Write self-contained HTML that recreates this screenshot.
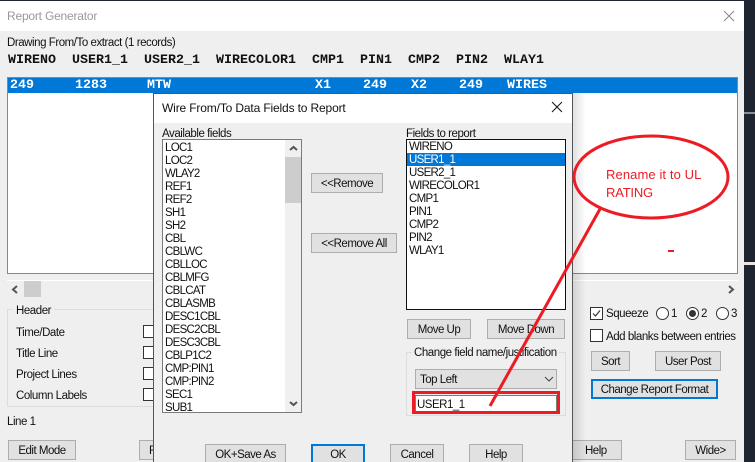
<!DOCTYPE html>
<html><head><meta charset="utf-8"><style>
html,body{margin:0;padding:0;width:755px;height:462px;overflow:hidden;background:#1f2530}
body{position:relative;font-family:"Liberation Sans",sans-serif;font-size:12px;color:#111}
div,span{position:absolute;box-sizing:border-box;white-space:nowrap}
.t{line-height:16px;height:14px;font-size:11.5px;letter-spacing:-.45px}
.b{background:#e1e1e1;border:1px solid #adadad;text-align:center;line-height:20px;font-size:11.5px;letter-spacing:-.5px}
.m{font-family:"Liberation Mono",monospace;font-weight:bold;font-size:13.33px;line-height:14px;height:14px}
.c{width:13px;height:13px;border:1px solid #333;background:#fff}
.r{width:13px;height:13px;border:1px solid #333;border-radius:50%;background:#fff}
.i{left:2px;line-height:15px;height:13px;font-size:11.5px;letter-spacing:-.7px}
</style></head><body>
<div style="left:744px;top:112px;width:11px;height:2px;background:#8a8d92"></div>
<div style="left:744px;top:262px;width:11px;height:3px;background:#e8e4e4"></div>
<div style="left:0;top:1px;width:744px;height:461px;background:#efefef"></div>
<div style="left:0;top:1px;width:744px;height:30px;background:#fff"></div>
<div class="t" style="left:7px;top:8px;color:#999;font-size:12px;letter-spacing:-.2px">Report Generator</div>
<svg style="position:absolute;left:723px;top:10px" width="12" height="12"><path d="M1 1L11 11M11 1L1 11" stroke="#888" fill="none"/></svg>
<div class="t" style="left:7px;top:35px">Drawing From/To extract (1 records)</div>
<div class="m" style="left:8px;top:54px">WIRENO</div>
<div class="m" style="left:72px;top:54px">USER1_1</div>
<div class="m" style="left:144px;top:54px">USER2_1</div>
<div class="m" style="left:216px;top:54px">WIRECOLOR1</div>
<div class="m" style="left:312px;top:54px">CMP1</div>
<div class="m" style="left:360px;top:54px">PIN1</div>
<div class="m" style="left:408px;top:54px">CMP2</div>
<div class="m" style="left:456px;top:54px">PIN2</div>
<div class="m" style="left:504px;top:54px">WLAY1</div>
<div style="left:7px;top:77px;width:731px;height:197px;background:#fff;border:1px solid #828790"></div>
<div style="left:8px;top:78px;width:729px;height:15px;background:#0078d7"></div>
<div class="m" style="left:10px;top:79px;color:#fff">249</div>
<div class="m" style="left:75px;top:79px;color:#fff">1283</div>
<div class="m" style="left:147px;top:79px;color:#fff">MTW</div>
<div class="m" style="left:315px;top:79px;color:#fff">X1</div>
<div class="m" style="left:363px;top:79px;color:#fff">249</div>
<div class="m" style="left:411px;top:79px;color:#fff">X2</div>
<div class="m" style="left:459px;top:79px;color:#fff">249</div>
<div class="m" style="left:507px;top:79px;color:#fff">WIRES</div>
<div style="left:7px;top:280px;width:731px;height:17px;background:#efefef;border-top:1px solid #fff"></div>
<div style="left:24px;top:281px;width:17px;height:16px;background:#cdcdcd"></div>
<svg style="position:absolute;left:11px;top:285px" width="8" height="9"><path d="M6 1L2 4.5L6 8" stroke="#555" stroke-width="2" fill="none"/></svg>
<svg style="position:absolute;left:727px;top:285px" width="8" height="9"><path d="M2 1L6 4.5L2 8" stroke="#555" stroke-width="2" fill="none"/></svg>
<div style="left:7px;top:309px;width:200px;height:98px;border:1px solid #dcdcdc"></div>
<div class="t" style="left:13px;top:303px;background:#efefef;padding:0 3px">Header</div>
<div class="t" style="left:16px;top:325px">Time/Date</div>
<div class="t" style="left:16px;top:346px">Title Line</div>
<div class="t" style="left:16px;top:367px">Project Lines</div>
<div class="t" style="left:16px;top:388px">Column Labels</div>
<div class="c" style="left:143px;top:325px"></div>
<div class="c" style="left:143px;top:346px"></div>
<div class="c" style="left:143px;top:367px"></div>
<div class="c" style="left:143px;top:388px"></div>
<div class="t" style="left:7px;top:414px">Line 1</div>
<div class="b" style="left:8px;top:440px;width:68px;height:20px">Edit Mode</div>
<div class="b" style="left:139px;top:440px;width:40px;height:20px;text-align:left;padding-left:9px">F</div>

<div class="c" style="left:590px;top:307px"></div>
<svg style="position:absolute;left:591px;top:308px" width="11" height="11"><path d="M2 5.5L4.5 8L9 2.5" stroke="#333" stroke-width="1.2" fill="none"/></svg>
<div class="t" style="left:606px;top:306px">Squeeze</div>
<div class="r" style="left:656px;top:307px"></div><div class="t" style="left:671px;top:306px">1</div>
<div class="r" style="left:686px;top:307px"></div><div style="left:689px;top:310px;width:7px;height:7px;border-radius:50%;background:#333"></div><div class="t" style="left:701px;top:306px">2</div>
<div class="r" style="left:716px;top:307px"></div><div class="t" style="left:731px;top:306px">3</div>
<div class="c" style="left:590px;top:329px"></div>
<div class="t" style="left:606px;top:329px">Add blanks between entries</div>
<div class="b" style="left:591px;top:351px;width:39px;height:20px">Sort</div>
<div class="b" style="left:655px;top:351px;width:66px;height:20px">User Post</div>
<div class="b" style="left:591px;top:379px;width:127px;height:20px;border:2px solid #0078d7;line-height:18px;color:#111">Change Report Format</div>
<div class="b" style="left:572px;top:440px;width:50px;height:20px;padding-left:0"><span style="left:12px;top:0">Help</span></div>
<div class="b" style="left:685px;top:440px;width:51px;height:20px">Wide&gt;</div>

<div style="left:572px;top:93px;width:14px;height:369px;background:linear-gradient(90deg,rgba(0,0,0,.13),rgba(0,0,0,0))"></div>
<div style="left:153px;top:93px;width:420px;height:369px;background:#efefef;border:1px solid #555;border-bottom:0"></div>
<div style="left:154px;top:94px;width:418px;height:29px;background:#fff"></div>
<div class="t" style="left:162px;top:100px;font-size:12px;letter-spacing:-.15px">Wire From/To Data Fields to Report</div>
<svg style="position:absolute;left:551px;top:101px" width="12" height="12"><path d="M1 1L11 11M11 1L1 11" stroke="#111" fill="none"/></svg>
<div class="t" style="left:162px;top:126px">Available fields</div>
<div class="t" style="left:406px;top:126px">Fields to report</div>

<div style="left:162px;top:139px;width:140px;height:274px;background:#fff;border:1px solid #7a7a7a;overflow:hidden">
<span class="i" style="top:1px">LOC1</span><span class="i" style="top:14px">LOC2</span><span class="i" style="top:27px">WLAY2</span><span class="i" style="top:40px">REF1</span><span class="i" style="top:53px">REF2</span><span class="i" style="top:66px">SH1</span><span class="i" style="top:79px">SH2</span><span class="i" style="top:92px">CBL</span><span class="i" style="top:105px">CBLWC</span><span class="i" style="top:118px">CBLLOC</span><span class="i" style="top:131px">CBLMFG</span><span class="i" style="top:144px">CBLCAT</span><span class="i" style="top:157px">CBLASMB</span><span class="i" style="top:170px">DESC1CBL</span><span class="i" style="top:183px">DESC2CBL</span><span class="i" style="top:196px">DESC3CBL</span><span class="i" style="top:209px">CBLP1C2</span><span class="i" style="top:222px">CMP:PIN1</span><span class="i" style="top:235px">CMP:PIN2</span><span class="i" style="top:248px">SEC1</span><span class="i" style="top:261px">SUB1</span>
<div style="left:122px;top:0;width:16px;height:272px;background:#f0f0f0"></div>
<div style="left:122px;top:17px;width:16px;height:46px;background:#cdcdcd"></div>
<svg style="position:absolute;left:126px;top:5px" width="9" height="7"><path d="M1 5L4.5 2L8 5" stroke="#555" stroke-width="2" fill="none"/></svg>
<svg style="position:absolute;left:126px;top:260px" width="9" height="7"><path d="M1 2L4.5 5L8 2" stroke="#555" stroke-width="2" fill="none"/></svg>
</div>

<div style="left:406px;top:139px;width:160px;height:171px;background:#fff;border:1px solid #111;overflow:hidden">
<div style="left:0;top:13px;width:158px;height:13px;background:#0078d7"></div>
<span class="i" style="top:0">WIRENO</span><span class="i" style="top:13px;color:#fff">USER1_1</span><span class="i" style="top:26px">USER2_1</span><span class="i" style="top:39px">WIRECOLOR1</span><span class="i" style="top:52px">CMP1</span><span class="i" style="top:65px">PIN1</span><span class="i" style="top:78px">CMP2</span><span class="i" style="top:91px">PIN2</span><span class="i" style="top:104px">WLAY1</span>
</div>

<div class="b" style="left:311px;top:173px;width:72px;height:20px">&lt;&lt;Remove</div>
<div class="b" style="left:311px;top:233px;width:86px;height:20px">&lt;&lt;Remove All</div>
<div class="b" style="left:407px;top:319px;width:64px;height:20px">Move Up</div>
<div class="b" style="left:487px;top:319px;width:78px;height:20px">Move Down</div>
<div style="left:406px;top:352px;width:160px;height:64px;border:1px solid #dcdcdc"></div>
<div class="t" style="left:412px;top:345px;background:#efefef;padding:0 2px">Change field name/justification</div>
<div class="b" style="left:415px;top:369px;width:142px;height:20px;text-align:left;padding-left:4px">Top Left</div>
<svg style="position:absolute;left:544px;top:376px" width="10" height="7"><path d="M1 1L5 5L9 1" stroke="#444" fill="none"/></svg>
<div style="left:415px;top:395px;width:142px;height:18px;background:#fff;border:1px solid #7a7a7a;line-height:18px;padding-left:1px;font-size:11.5px;letter-spacing:-.5px">USER1_1</div>
<div class="b" style="left:205px;top:444px;width:81px;height:20px">OK+Save As</div>
<div class="b" style="left:311px;top:444px;width:54px;height:20px;border:2px solid #0078d7;line-height:18px">OK</div>
<div class="b" style="left:390px;top:444px;width:54px;height:20px">Cancel</div>
<div class="b" style="left:469px;top:444px;width:54px;height:20px">Help</div>

<svg style="position:absolute;left:0;top:0" width="755" height="462">
<ellipse cx="651" cy="177" rx="77" ry="41" stroke="#ed1c24" stroke-width="3" fill="none"/>
<path d="M600 209L490 406" stroke="#ed1c24" stroke-width="3" fill="none"/>
<rect x="413.500" y="392.500" width="145" height="20" stroke="#ed1c24" stroke-width="3" fill="none"/>
<rect x="668" y="250" width="6" height="2" fill="#ed1c24"/>
<text x="606" y="179" font-family="Liberation Sans,sans-serif" font-size="13" fill="#ed1c24" letter-spacing=".1">Rename it to UL</text>
<text x="606" y="197" font-family="Liberation Sans,sans-serif" font-size="13" fill="#ed1c24" letter-spacing="-.2">RATING</text>
</svg>
</body></html>
